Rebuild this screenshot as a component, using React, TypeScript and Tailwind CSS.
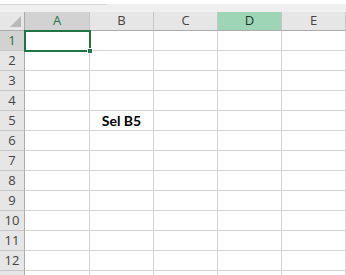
import React from 'react';

const cols = ['A', 'B', 'C', 'D', 'E'];
const rows = Array.from({ length: 13 }, (_, i) => i + 1);

// Zellen mit Inhalt
const cells: Record<string, string> = { B5: 'Sel B5' };

export default function App() {
  return (
    <div className="w-[346px] h-[275px] overflow-hidden bg-white font-['Lato',sans-serif] relative">
      {/* Leiste oben */}
      <div className="h-[12px] bg-[#efefef] border-t-[4px] border-white flex">
        <div className="w-[107px] h-[1px] bg-[#d8d8d8]" />
      </div>

      <div className="relative">
        <div className="grid grid-cols-[25px_65px_64px_64px_64px_64px]">
          {/* Ecke */}
          <div className="h-[19px] bg-[#e6e6e6] border-r border-b border-[#ababab] relative">
            <svg className="absolute right-[3px] bottom-[3px]" width="11" height="11" viewBox="0 0 11 11">
              <path d="M11 0 L11 11 L0 11 Z" fill="#b8b8b8" />
            </svg>
          </div>
          {cols.map((c) => (
            <div
              key={c}
              className={
                c === 'A'
                  ? 'h-[19px] bg-[#d2d2d2] border-r border-b border-r-[#c6c6c6] border-b-[#ababab] flex items-center justify-center text-[13px] text-[#217346] font-["Open_Sans",sans-serif]'
                  : c === 'D'
                  ? 'h-[19px] bg-[#9fd5b7] border-r border-b border-r-[#c6c6c6] border-b-[#ababab] flex items-center justify-center text-[13px] text-[#1c3a28] font-["Open_Sans",sans-serif]'
                  : 'h-[19px] bg-[#e6e6e6] border-r border-b border-r-[#c6c6c6] border-b-[#ababab] flex items-center justify-center text-[13px] text-[#444444] font-["Open_Sans",sans-serif]'
              }
            >
              {c}
            </div>
          ))}

          {rows.map((r) => (
            <React.Fragment key={r}>
              <div
                className={
                  r === 1
                    ? 'h-[20px] bg-[#d2d2d2] border-r border-b border-r-[#ababab] border-b-[#c6c6c6] flex items-center justify-center text-[13px] text-[#217346] font-["Open_Sans",sans-serif]'
                    : 'h-[20px] bg-[#e6e6e6] border-r border-b border-r-[#ababab] border-b-[#c6c6c6] flex items-center justify-center text-[13px] text-[#444444] font-["Open_Sans",sans-serif]'
                }
              >
                {/* Zeile 13 ist nur angeschnitten */}
                {r < 13 ? r : ''}
              </div>
              {cols.map((c) => (
                <div
                  key={c + r}
                  className="h-[20px] border-r border-b border-[#d4d4d4] flex items-center justify-center text-[14px] font-bold text-black leading-none"
                >
                  {cells[c + r] ?? ''}
                </div>
              ))}
            </React.Fragment>
          ))}
        </div>

        {/* Auswahl A1 */}
        <div className="absolute left-[24px] top-[18px] w-[67px] h-[22px] border-2 border-[#217346] pointer-events-none">
          <div className="absolute right-[-4px] bottom-[-4px] w-[6px] h-[6px] bg-[#217346] border border-white" />
        </div>
      </div>
    </div>
  );
}
